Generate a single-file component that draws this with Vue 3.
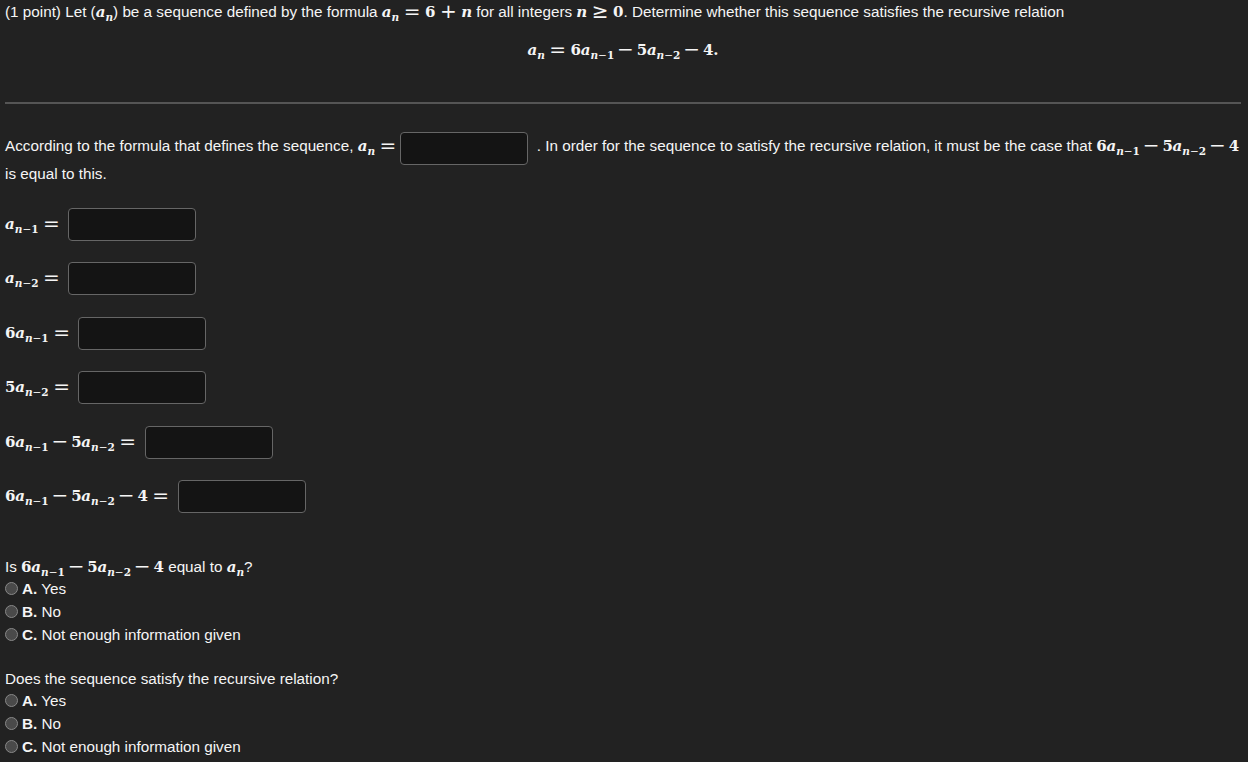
<script setup>
import { h } from "vue";

const An = (props) =>
  h("span", { class: "an" }, [
    props.c ? h("span", { class: "num" }, props.c) : null,
    h("i", { class: "var" }, "a"),
    h("sub", { class: "sub" }, [
      h("i", { class: "var" }, "n"),
      props.s ? h("span", { class: "subop" }, "−") : null,
      props.s ? props.s : null,
    ]),
  ]);
An.props = ["c", "s"];

const rows = [
  { terms: [{ s: "1" }], tail: "" },
  { terms: [{ s: "2" }], tail: "" },
  { terms: [{ c: "6", s: "1" }], tail: "" },
  { terms: [{ c: "5", s: "2" }], tail: "" },
  { terms: [{ c: "6", s: "1" }, { c: "5", s: "2" }], tail: "" },
  { terms: [{ c: "6", s: "1" }, { c: "5", s: "2" }], tail: "4" },
];

const choices = [
  { key: "A.", label: "Yes" },
  { key: "B.", label: "No" },
  { key: "C.", label: "Not enough information given" },
];
</script>

<template>
  <div class="page">
    <p class="line first">
      (1 point) Let (<span class="math"><An /></span>) be a sequence defined by the formula
      <span class="math"><An /><span class="op">=</span>6<span class="op">+</span><i class="var">n</i></span>
      for all integers <span class="math"><i class="var">n</i><span class="op">≥</span>0</span>. Determine whether this sequence satisfies the recursive relation
    </p>
    <div class="display math">
      <An /><span class="op">=</span><An c="6" s="1" /><span class="op minus">−</span><An c="5" s="2" /><span class="op minus">−</span>4.
    </div>

    <hr class="rule" />

    <p class="line according">
      According to the formula that defines the sequence, <span class="math"><An /><span class="op">=</span></span><input class="box inline" type="text" />. In order for the sequence to satisfy the recursive relation, it must be the case that
      <span class="math"><An c="6" s="1" /><span class="op minus">−</span><An c="5" s="2" /><span class="op minus">−</span>4</span>
      <br />is equal to this.
    </p>

    <div class="rows">
      <div v-for="(row, i) in rows" :key="i" class="row">
        <span class="math">
          <template v-for="(t, j) in row.terms" :key="j">
            <span v-if="j > 0" class="op minus">−</span><An :c="t.c" :s="t.s" />
          </template>
          <template v-if="row.tail"><span class="op minus">−</span>{{ row.tail }}</template>
          <span class="op">=</span>
        </span>
        <input class="box" type="text" />
      </div>
    </div>

    <div class="question q1">
      <p class="prompt">
        Is <span class="math"><An c="6" s="1" /><span class="op minus">−</span><An c="5" s="2" /><span class="op minus">−</span>4</span> equal to <span class="math"><An /></span>?
      </p>
      <label v-for="c in choices" :key="c.key" class="choice">
        <input type="radio" name="q1" class="radio" /><b>{{ c.key }}</b> {{ c.label }}
      </label>
    </div>

    <div class="question q2">
      <p class="prompt">Does the sequence satisfy the recursive relation?</p>
      <label v-for="c in choices" :key="c.key" class="choice">
        <input type="radio" name="q2" class="radio" /><b>{{ c.key }}</b> {{ c.label }}
      </label>
    </div>
  </div>
</template>

<style>
html, body {
  background: #222;
}
</style>

<style scoped>
.page {
  height: 762px;
  overflow: hidden;
  box-sizing: border-box;
  padding: 0 7px 0 5px;
  background: #222;
  color: #f5f5f5;
  font-family: "Liberation Sans", Arial, sans-serif;
  font-size: 15.25px;
}

.line {
  margin: 0;
  white-space: nowrap;
}

.first {
  line-height: 24px;
}

.math {
  font-family: "DejaVu Serif", serif;
  font-weight: 700;
  font-size: 15px;
  line-height: 1;
  white-space: nowrap;
}

:deep(.num) {
  letter-spacing: -0.3px;
}

.var,
:deep(.var) {
  font-style: italic;
}

:deep(.sub) {
  font-size: 10.5px;
  line-height: 0;
  vertical-align: -4px;
}

.op,
:deep(.subop) {
  font-family: "DejaVu Sans", sans-serif;
  font-weight: 400;
}

.op {
  font-size: 20px;
  line-height: 0;
  margin: 0 4.5px;
  vertical-align: -1px;
}

.minus {
  margin: 0 2.9px;
}

:deep(.subop) {
  font-size: 10.5px;
}

.display {
  text-align: center;
  margin-top: 14px;
  line-height: 24px;
}

.rule {
  margin: 40px 0 0;
  border: 0;
  height: 2px;
  background: #555;
}

.according {
  margin-top: 28px;
  line-height: 28px;
}

.box {
  width: 128px;
  height: 33px;
  box-sizing: border-box;
  background: #141414;
  border: 1px solid #666;
  border-radius: 4px;
  padding: 0;
}

.inline {
  margin: -2px 9px -6px -1px;
  vertical-align: middle;
}

.rows {
  margin-top: 20px;
  display: flex;
  flex-direction: column;
  gap: 21.4px;
}

.row {
  display: flex;
  align-items: center;
  gap: 4px;
  height: 33px;
}

.question {
  line-height: 23px;
}

.q1 {
  margin-top: 42.5px;
}

.q2 {
  margin-top: 21px;
}

.prompt {
  margin: 0;
  height: 22px;
}

.choice {
  display: flex;
  align-items: center;
  height: 23px;
  white-space: pre;
}

.radio {
  appearance: none;
  width: 13px;
  height: 13px;
  margin: 0 4px 0 0;
  border: 1px solid #888;
  border-radius: 50%;
  background: #4a4a4a;
}
</style>
